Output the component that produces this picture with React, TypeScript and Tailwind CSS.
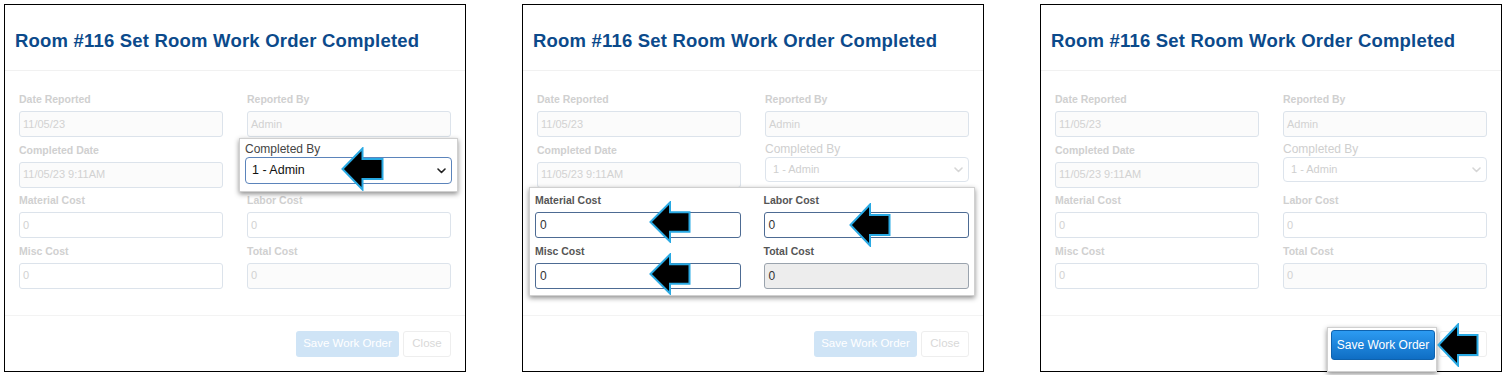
import React from "react";

const font = { fontFamily: '"Liberation Sans", Arial, sans-serif' };

type Field = { label: string; value: string; readOnly?: boolean; select?: boolean };

const fields: Field[] = [
  { label: "Date Reported", value: "11/05/23", readOnly: true },
  { label: "Reported By", value: "Admin", readOnly: true },
  { label: "Completed Date", value: "11/05/23 9:11AM", readOnly: true },
  { label: "Completed By", value: "1 - Admin", select: true },
  { label: "Material Cost", value: "0" },
  { label: "Labor Cost", value: "0" },
  { label: "Misc Cost", value: "0" },
  { label: "Total Cost", value: "0", readOnly: true },
];

const Chevron = ({ color }: { color: string }) => (
  <svg width="9" height="6" viewBox="0 0 9 6" fill="none">
    <path d="M1 1l3.5 3.5L8 1" stroke={color} strokeWidth="1.6" strokeLinecap="round" strokeLinejoin="round" />
  </svg>
);

// left pointing arrow, black with a cyan outline
const Arrow = ({ left, top, w, h }: { left: number; top: number; w: number; h: number }) => {
  const s = 1.5;
  const hb = w / 2;
  const st = h * 0.27;
  const sb = h * 0.73;
  const pts = [
    [s, h / 2],
    [hb, s],
    [hb, st],
    [w - s, st],
    [w - s, sb],
    [hb, sb],
    [hb, h - s],
  ]
    .map((p) => p.join(","))
    .join(" ");
  return (
    <svg
      className="absolute"
      style={{ left, top }}
      width={w}
      height={h}
      viewBox={`0 0 ${w} ${h}`}
    >
      <polygon points={pts} fill="#000" stroke="#29a9e3" strokeWidth="2" strokeLinejoin="miter" />
    </svg>
  );
};

// hidden = parts that sit under a highlight box anyway
const BaseForm = ({ hidden = [] }: { hidden?: string[] }) => (
  <>
    {/* Header */}
    <div className="h-[66px] border-b border-[#f1f1f1] pl-[10px] pt-[26px]">
      <h2 className="text-[18.5px] leading-[20px] font-bold text-[#0b4a8b] tracking-[0.2px]">
        Room #116 Set Room Work Order Completed
      </h2>
    </div>

    {/* Body */}
    <div className="h-[245px] border-b border-[#f3f3f3] px-[14px] pt-[22px]">
      <div className="grid grid-cols-2 gap-x-[24px] gap-y-[6.5px] items-start">
        {fields.map((f) =>
          f.select ? (
            <div key={f.label} className={hidden.includes(f.label) ? "invisible" : ""}>
              <div className="-mt-[1.5px] text-[12px] leading-[14px] text-[#cfcfcf]">{f.label}</div>
              <div className="mt-[1px] h-[25px] rounded-[4px] border border-[#dde4ec] bg-white flex items-center justify-between pl-[7px] pr-[5px] text-[11px] text-[#cfcfcf]">
                <span>{f.value}</span>
                <Chevron color="#d6d6d6" />
              </div>
            </div>
          ) : (
            <div key={f.label} className={hidden.includes(f.label) ? "invisible" : ""}>
              <div className="text-[10.5px] leading-[13px] font-bold text-[#d0d0d0]">{f.label}</div>
              <div
                className={`mt-[5px] h-[26px] rounded-[3px] border border-[#dce3eb] flex items-center pl-[3px] text-[11px] text-[#d2d2d2] ${
                  f.readOnly ? "bg-[#fbfbfb]" : "bg-white"
                }`}
              >
                {f.value}
              </div>
            </div>
          )
        )}
      </div>
    </div>

    {/* Footer */}
    <div className="flex justify-end gap-[4px] pr-[14px] pt-[15px]">
      <div
        className={`h-[26px] w-[103px] rounded-[3px] bg-[#cfe4f6] text-white text-[11.5px] flex items-center justify-center ${
          hidden.includes("save") ? "invisible" : ""
        }`}
      >
        Save Work Order
      </div>
      <div className="h-[26px] w-[48px] rounded-[3px] border border-[#eeeeee] text-[#d8d8d8] text-[11.5px] flex items-center justify-center">
        Close
      </div>
    </div>
  </>
);

const Panel = ({ hidden, children }: { hidden?: string[]; children?: React.ReactNode }) => (
  <div className="relative w-[462px] h-[368px] border border-black bg-white shrink-0">
    <BaseForm hidden={hidden} />
    {children}
  </div>
);

const CostInput = ({ label, gray }: { label: string; gray?: boolean }) => (
  <div>
    <div className="text-[10.5px] leading-[13px] font-bold text-[#555]">{label}</div>
    <div
      className={`mt-[5px] h-[26px] rounded-[3px] border flex items-center pl-[4px] text-[12px] text-[#333] ${
        gray ? "bg-[#ededed] border-[#9aa3ad]" : "bg-white border-[#4d6b93]"
      }`}
    >
      0
    </div>
  </div>
);

export default function App() {
  return (
    <div className="w-[1505px] h-[375px] bg-white pl-[4px] pt-[4px] flex gap-[56px]" style={font}>
      {/* Panel 1: Completed By */}
      <Panel hidden={["Completed By"]}>
        <div className="absolute left-[234px] top-[133px] w-[219px] h-[54px] bg-white border border-[#d0d0d0] shadow-[0_2px_5px_rgba(0,0,0,0.45)] px-[5px] pt-[3px]">
          <div className="text-[12px] leading-[14px] text-[#444]">Completed By</div>
          <div className="mt-[1px] h-[27px] rounded-[4px] border border-[#5b84bb] flex items-center justify-between pl-[6px] pr-[5px] text-[12.5px] text-[#111]">
            <span>1 - Admin</span>
            <Chevron color="#222" />
          </div>
        </div>
        <Arrow left={336} top={142} w={43} h={44} />
      </Panel>

      {/* Panel 2: costs */}
      <Panel hidden={["Material Cost", "Labor Cost", "Misc Cost", "Total Cost"]}>
        <div className="absolute left-[6px] top-[182px] w-[446px] h-[109px] bg-white border border-[#d0d0d0] shadow-[0_2px_5px_rgba(0,0,0,0.45)] px-[5px] pt-[6px]">
          <div className="grid grid-cols-2 gap-x-[23px] gap-y-[7px]">
            <CostInput label="Material Cost" />
            <CostInput label="Labor Cost" />
            <CostInput label="Misc Cost" />
            <CostInput label="Total Cost" gray />
          </div>
        </div>
        <Arrow left={126} top={196} w={42} h={42} />
        <Arrow left={326} top={198} w={42} h={44} />
        <Arrow left={126} top={248} w={42} h={42} />
      </Panel>

      {/* Panel 3: save */}
      <Panel hidden={["save"]}>
        <div className="absolute left-[286px] top-[322px] w-[110px] h-[45px] bg-white border border-[#d0d0d0] shadow-[0_2px_5px_rgba(0,0,0,0.45)] pl-[3px] pt-[2px]">
          <div className="h-[30px] w-[104px] rounded-[3px] border border-[#0e62ae] bg-gradient-to-b from-[#2c9bf2] to-[#0f6ec4] text-white text-[12px] flex items-center justify-center">
            Save Work Order
          </div>
        </div>
        <Arrow left={396} top={318} w={42} h={44} />
      </Panel>
    </div>
  );
}
